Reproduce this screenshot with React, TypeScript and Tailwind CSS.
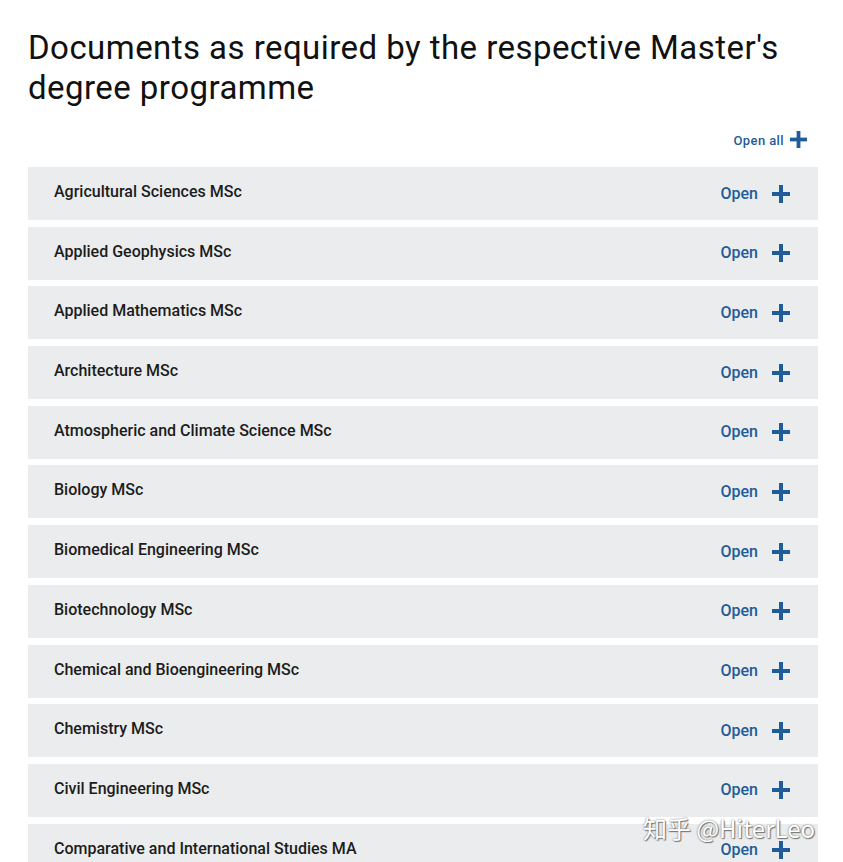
import React from "react";

const items = [
  "Agricultural Sciences MSc",
  "Applied Geophysics MSc",
  "Applied Mathematics MSc",
  "Architecture MSc",
  "Atmospheric and Climate Science MSc",
  "Biology MSc",
  "Biomedical Engineering MSc",
  "Biotechnology MSc",
  "Chemical and Bioengineering MSc",
  "Chemistry MSc",
  "Civil Engineering MSc",
  "Comparative and International Studies MA",
];

function Plus({ size }: { size: number }) {
  return (
    <svg width={size} height={size} viewBox="0 0 18 18" className="block">
      <rect x="7" y="0" width="4" height="18" fill="#1f5c99" />
      <rect x="0" y="7" width="18" height="4" fill="#1f5c99" />
    </svg>
  );
}

export default function App() {
  return (
    <div
      className="relative w-[843px] h-[862px] overflow-hidden bg-white"
      style={{ fontFamily: "Roboto, 'Noto Sans', sans-serif" }}
    >
      <div className="pl-[28px] pr-[25px]">
        <h1 className="pt-[28px] text-[33px] leading-[40px] text-[#111] font-normal tracking-[0.45px]">
          Documents as required by the respective Master's degree programme
        </h1>
        <div className="flex justify-end items-center gap-[6px] pr-[11px] mt-[16px] h-[30px]">
          <span className="text-[13px] font-medium text-[#1f5c99] tracking-[0.4px] mt-[3px]">Open all</span>
          <Plus size={17} />
        </div>
        <div className="mt-[13px] flex flex-col gap-[6.7px]">
          {items.map((t) => (
            <div
              key={t}
              className="flex items-center justify-between h-[53px] bg-[#ebeced] pl-[26px] pr-[28px]"
            >
              <span className="text-[16px] font-medium text-[#1c1c1c] tracking-[0px] -mt-[3px]">{t}</span>
              <div className="flex items-center gap-[14px]">
                <span className="text-[16px] font-medium text-[#1f5c99] tracking-[0px]">Open</span>
                <Plus size={18} />
              </div>
            </div>
          ))}
        </div>
      </div>
      <div
        className="absolute left-[643px] top-[810px] text-[24px] text-white"
        style={{
          fontFamily: "'Noto Sans CJK SC', Roboto, sans-serif",
          textShadow: "0 0 2px #666, 1px 1px 1px #777",
        }}
      >
        知乎 @HiterLeo
      </div>
    </div>
  );
}
